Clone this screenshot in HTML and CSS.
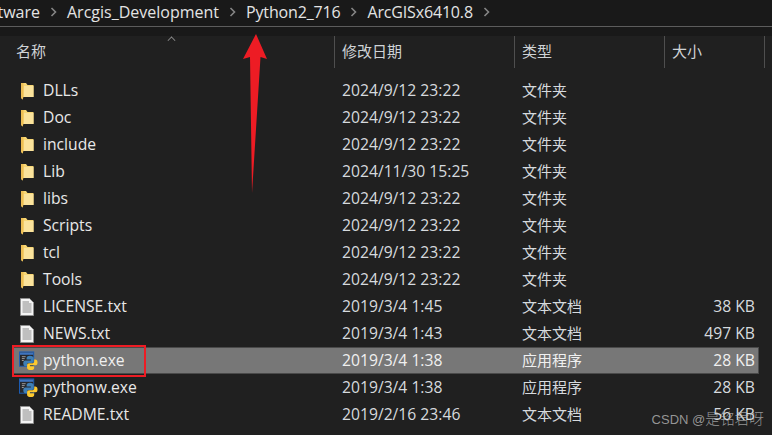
FILE: index.html
```html
<!DOCTYPE html>
<html lang="zh-CN">
<head>
<meta charset="utf-8">
<title>Python2_716</title>
<link rel="stylesheet" href="styles.css">
</head>
<body>
<svg class="defs" width="0" height="0" aria-hidden="true">
  <defs>
    <symbol id="folder" viewBox="0 0 14 18">
      <path d="M1 1 H6 L7.5 3 H13.5 V15 H3 V17.5 L1 16 Z" fill="#f8d775"/>
      <path d="M4 4 H13.5 V15 H3.5 Z" fill="#fbe39c"/>
      <path d="M1 1 H3.5 V15.5 H3 V17.5 L1 16 Z" fill="#eebf55"/>
    </symbol>
    <symbol id="doc" viewBox="0 0 14 18">
      <path d="M0.5 0.5 H9.5 L13.5 4.5 V17.5 H0.5 Z" fill="#f4f4f4" stroke="#8f8f8f"/>
      <path d="M2.5 4 H9 M2.5 6 H11.5 M2.5 8 H11.5 M2.5 10 H11.5 M2.5 12 H11.5 M2.5 14 H11.5" stroke="#8a8a8a"/>
    </symbol>
    <symbol id="py" viewBox="0 0 20 20">
      <rect x="0.5" y="1" width="15" height="15" fill="#26282c" stroke="#1d5fb8"/>
      <rect x="1" y="1.5" width="14" height="2.5" fill="#3f74bd"/>
      <path d="M3 6 H7 M3 8 H6 M3 10 H5" stroke="#a0a0a0"/>
      <path d="M11.5 5 C9 5 8 6 8 7.5 V9 H12.5 V10 H6.5 C5 10 4.5 11.5 4.5 13 C4.5 15 5.5 16 7 16 H8.5 V14 C8.5 13 9.5 12.5 10.5 12.5 H13.5 C15 12.5 15.5 11.5 15.5 10 V7.5 C15.5 6 14 5 11.5 5 Z" fill="#3f7fb5"/>
      <path d="M12.5 20 C15 20 16 19 16 17.5 V16 H11.5 V15 H17.5 C19 15 19.5 13.5 19.5 12 C19.5 10 18.5 9 17 9 H16 V11 C16 12 15 13 14 13 H10.5 C9 13 8.5 14 8.5 15 V17.5 C8.5 19 10 20 12.5 20 Z" fill="#fdc92f"/>
    </symbol>
    <symbol id="chev" viewBox="0 0 6 10">
      <path d="M1 1 L5 5 L1 9" fill="none" stroke="#858585" stroke-width="1.6"/>
    </symbol>
  </defs>
</svg>

<div class="window">
  <nav class="crumbs">
    <div class="cut"><span>tware</span></div>
    <svg class="sep"><use href="#chev"/></svg>
    <span>Arcgis_Development</span>
    <svg class="sep"><use href="#chev"/></svg>
    <span class="tight">Python2_716</span>
    <svg class="sep"><use href="#chev"/></svg>
    <span class="tight">ArcGISx6410.8</span>
    <svg class="sep"><use href="#chev"/></svg>
  </nav>
  <div class="strip"></div>

  <header class="head">
    <div class="hcell hname">名称<span class="caret"></span></div>
    <div class="hcell">修改日期</div>
    <div class="hcell">类型</div>
    <div class="hcell">大小</div>
  </header>

  <main class="list">
    <div class="row"><svg class="ico"><use href="#folder"/></svg><span class="name">DLLs</span><span class="date">2024/9/12 23:22</span><span class="type">文件夹</span><span class="size"></span></div>
    <div class="row"><svg class="ico"><use href="#folder"/></svg><span class="name">Doc</span><span class="date">2024/9/12 23:22</span><span class="type">文件夹</span><span class="size"></span></div>
    <div class="row"><svg class="ico"><use href="#folder"/></svg><span class="name">include</span><span class="date">2024/9/12 23:22</span><span class="type">文件夹</span><span class="size"></span></div>
    <div class="row"><svg class="ico"><use href="#folder"/></svg><span class="name">Lib</span><span class="date">2024/11/30 15:25</span><span class="type">文件夹</span><span class="size"></span></div>
    <div class="row"><svg class="ico"><use href="#folder"/></svg><span class="name">libs</span><span class="date">2024/9/12 23:22</span><span class="type">文件夹</span><span class="size"></span></div>
    <div class="row"><svg class="ico"><use href="#folder"/></svg><span class="name">Scripts</span><span class="date">2024/9/12 23:22</span><span class="type">文件夹</span><span class="size"></span></div>
    <div class="row"><svg class="ico"><use href="#folder"/></svg><span class="name">tcl</span><span class="date">2024/9/12 23:22</span><span class="type">文件夹</span><span class="size"></span></div>
    <div class="row"><svg class="ico"><use href="#folder"/></svg><span class="name">Tools</span><span class="date">2024/9/12 23:22</span><span class="type">文件夹</span><span class="size"></span></div>
    <div class="row"><svg class="ico"><use href="#doc"/></svg><span class="name">LICENSE.txt</span><span class="date">2019/3/4 1:45</span><span class="type">文本文档</span><span class="size">38 KB</span></div>
    <div class="row"><svg class="ico"><use href="#doc"/></svg><span class="name">NEWS.txt</span><span class="date">2019/3/4 1:43</span><span class="type">文本文档</span><span class="size">497 KB</span></div>
    <div class="row selected"><svg class="ico ico-py"><use href="#py"/></svg><span class="name">python.exe</span><span class="date">2019/3/4 1:38</span><span class="type">应用程序</span><span class="size">28 KB</span><div class="redbox"></div></div>
    <div class="row"><svg class="ico ico-py"><use href="#py"/></svg><span class="name">pythonw.exe</span><span class="date">2019/3/4 1:38</span><span class="type">应用程序</span><span class="size">28 KB</span></div>
    <div class="row"><svg class="ico"><use href="#doc"/></svg><span class="name">README.txt</span><span class="date">2019/2/16 23:46</span><span class="type">文本文档</span><span class="size">56 KB</span></div>
  </main>

  <svg class="arrow" width="50" height="170" viewBox="0 0 50 170" aria-hidden="true">
    <path d="M26 4 L37 29 L30.5 27 L22 163 L20 27 L13 29 Z" fill="#ed1c24"/>
  </svg>
  <div class="mark">CSDN @<span class="mark-cjk">是铭君呀</span></div>
</div>
</body>
</html>
```

FILE: styles.css
```css
* { box-sizing: border-box; }
html, body { margin: 0; padding: 0; }
body {
  width: 772px;
  height: 435px;
  overflow: hidden;
  background: #202020;
  color: #e4e4e4;
  font-family: "Open Sans", "Noto Sans CJK SC", sans-serif;
  font-size: 15.7px;
}
.defs { position: absolute; }
.window { position: relative; width: 772px; height: 435px; overflow: hidden; }

.crumbs {
  display: flex;
  align-items: center;
  height: 27px;
  background: #191919;
  border-bottom: 1px solid #5c5c5c;
  white-space: nowrap;
  padding-bottom: 2px;
  font-size: 16px;
}
.cut { display: flex; justify-content: flex-end; width: 40px; }
.sep { flex: none; width: 27px; height: 10px; }
.tight { letter-spacing: -0.16px; }
.strip { height: 9px; background: #191919; }

.head {
  display: grid;
  grid-template-columns: 335px 180px 150px 100px;
  height: 32px;
  color: #cfd3d6;
  font-size: 15px;
}
.hcell {
  position: relative;
  padding: 0 0 3px 7px;
  display: flex;
  align-items: center;
  border-right: 1px solid #4f4f4f;
}
.hname { padding-left: 16px; }
.caret {
  position: absolute;
  left: 168px;
  top: 1px;
  width: 7px;
  height: 7px;
  border-left: 1px solid #9a9a9a;
  border-top: 1px solid #9a9a9a;
  transform: rotate(45deg) scale(.8);
}

.list { padding: 9px 0 0 0; }
.row {
  position: relative;
  display: grid;
  grid-template-columns: 19px 299px 180px 120px 117px;
  align-items: center;
  width: 746px;
  height: 27px;
  margin-left: 13px;
  padding-left: 7px;
  padding-right: 4px;
  line-height: 27px;
  white-space: nowrap;
}
.name, .date, .type { margin-left: 4px; }
.name { color: #e8e8e8; }
.date, .size { color: #d6dade; }
.type { color: #d6dade; font-size: 15px; }
.ico { width: 14px; height: 18px; }
.ico-py { width: 19px; height: 19px; margin-left: -1px; }
.size { text-align: right; }
.selected {
  background: #777777;
  box-shadow: inset 0 0 0 1px #4a4a4a;
}
.selected .name, .selected .date, .selected .type, .selected .size { color: #f0f0f0; }
.redbox {
  position: absolute;
  left: -1px;
  top: -2px;
  width: 134px;
  height: 32px;
  border: 2px solid #ed1c24;
}

.arrow { position: absolute; left: 230px; top: 30px; }
.mark {
  position: absolute;
  right: 8px;
  bottom: 7px;
  font-family: "Liberation Sans", "Noto Sans CJK SC", sans-serif;
  font-size: 13px;
  line-height: 16px;
  color: rgba(190,190,190,.75);
}
.mark-cjk {
  font-family: "Noto Sans CJK SC", sans-serif;
  font-weight: 300;
  font-size: 14.7px;
}
```
